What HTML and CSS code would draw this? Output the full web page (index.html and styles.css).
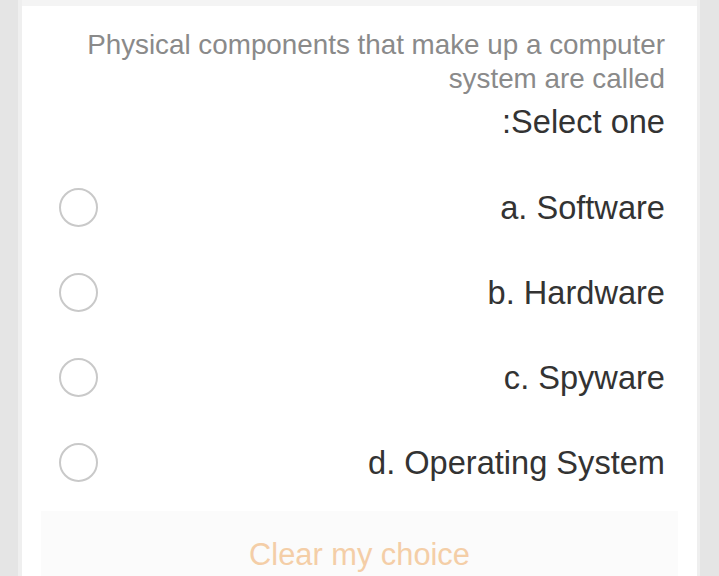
FILE: index.html
```html
<!DOCTYPE html>
<html lang="en">
<head>
<meta charset="utf-8">
<link rel="stylesheet" href="styles.css">
</head>
<body>
<div class="page">
  <div class="card">
    <div class="topstrip"></div>
    <div class="qtext">Physical components that make up a computer system are called</div>
    <div class="prompt">:Select one</div>
    <div class="options">
      <label class="opt"><span class="radio"></span><span class="label">a. Software</span></label>
      <label class="opt"><span class="radio"></span><span class="label">b. Hardware</span></label>
      <label class="opt"><span class="radio"></span><span class="label">c. Spyware</span></label>
      <label class="opt"><span class="radio"></span><span class="label">d. Operating System</span></label>
    </div>
    <div class="clearbox"><span class="clear">Clear my choice</span></div>
  </div>
</div>
</body>
</html>
```
FILE: styles.css
```css
html, body {
  margin: 0;
  padding: 0;
  overflow: hidden;
}
body {
  background: #e5e5e5;
  font-family: "Liberation Sans", Arial, sans-serif;
}
.page {
  padding: 0 19px 0 18px;
}
.card {
  background: #ffffff;
  border-left: 4px solid #efefef;
  border-right: 3px solid #efefef;
}
.topstrip {
  height: 6px;
  background: #f4f4f4;
}
.qtext {
  margin: 22px 32px 0 60px;
  text-align: right;
  font-size: 27.8px;
  line-height: 34px;
  color: #8a8a8a;
}
.prompt {
  margin: 9px 32px 0 0;
  text-align: right;
  font-size: 32.6px;
  line-height: 34px;
  color: #333333;
}
.options {
  margin-top: 26px;
}
.opt {
  display: flex;
  align-items: center;
  justify-content: space-between;
  height: 85px;
  padding: 0 32px 0 37px;
}
.radio {
  width: 35px;
  height: 35px;
  border: 2px solid #c9c9c9;
  border-radius: 50%;
  box-sizing: content-box;
}
.label {
  font-size: 32.6px;
  color: #333333;
}
.clearbox {
  margin: 6px 19px 0 19px;
  background: #fbfbfb;
  padding-top: 27px;
  height: 38px;
  text-align: center;
}
.clear {
  font-size: 30.8px;
  line-height: 34px;
  color: #f4cea7;
}
```
